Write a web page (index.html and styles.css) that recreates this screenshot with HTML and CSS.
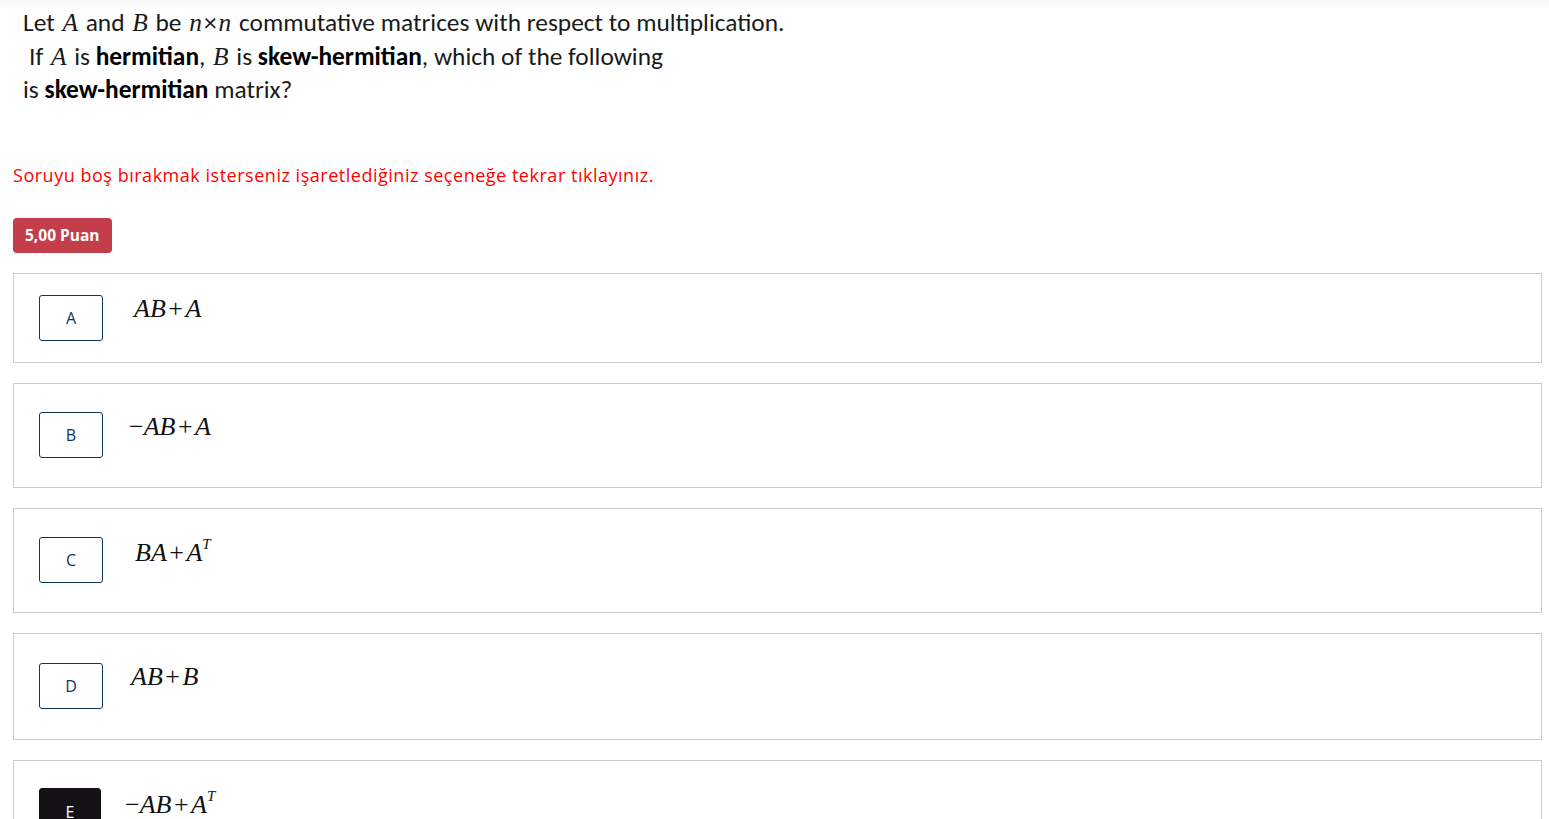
FILE: index.html
```html
<!DOCTYPE html>
<html lang="tr">
<head>
<meta charset="utf-8">
<title>Soru</title>
<link rel="stylesheet" href="styles.css">
</head>
<body>
<div class="topbar"></div>
<main class="page">
  <div class="question">
    <p class="q-line">Let <i class="m">A</i> and <i class="m">B</i> be <i class="m">n</i>×<i class="m">n</i> commutative matrices with respect to multiplication.</p>
    <p class="q-line q-indent">If <i class="m">A</i> is <b>hermitian</b>, <i class="m">B</i> is <b>skew-hermitian</b>, which of the following</p>
    <p class="q-line">is <b>skew-hermitian</b> matrix?</p>
  </div>
  <p class="notice">Soruyu boş bırakmak isterseniz işaretlediğiniz seçeneğe tekrar tıklayınız.</p>
  <span class="badge">5,00 Puan</span>
  <ul class="options">
    <li class="option">
      <span class="letter">A</span>
      <div class="math h46 o-a"><i>AB</i><span class="op">+</span><i>A</i></div>
    </li>
    <li class="option">
      <span class="letter">B</span>
      <div class="math h61 o-b">−<i>AB</i><span class="op">+</span><i>A</i></div>
    </li>
    <li class="option">
      <span class="letter">C</span>
      <div class="math h61 o-c"><i>BA</i><span class="op">+</span><i>A</i><sup><i>T</i></sup></div>
    </li>
    <li class="option">
      <span class="letter">D</span>
      <div class="math h63 o-d"><i>AB</i><span class="op">+</span><i>B</i></div>
    </li>
    <li class="option">
      <span class="letter selected">E</span>
      <div class="math h58 o-e">−<i>AB</i><span class="op">+</span><i>A</i><sup><i>T</i></sup></div>
    </li>
  </ul>
</main>
</body>
</html>
```
FILE: styles.css
```css
html, body {
  margin: 0;
  padding: 0;
  background: #fff;
}
body {
  font-family: "Open Sans", "Liberation Sans", sans-serif;
  color: #222;
  overflow: hidden;
  height: 819px;
}
.topbar {
  height: 0;
  box-shadow: 0 0 8px 3px rgba(0,0,0,0.06);
}
.page {
  padding: 0 7px 0 13px;
}
.question {
  padding: 6px 0 0 10px;
  font-family: Carlito, "Liberation Sans Narrow", "Open Sans", sans-serif;
  font-size: 25.4px;
  color: #1a1a1a;
}
.q-line {
  margin: 0;
  line-height: 33.5px;
}
.q-indent {
  padding-left: 6px;
}
.question b {
  font-weight: 700;
  color: #000;
}
.m {
  font-family: "Liberation Serif", serif;
  font-style: italic;
  padding: 0 2px;
}
.notice {
  margin: 55px 0 0;
  color: #f00;
  font-family: "Open Sans", sans-serif;
  font-size: 18px;
  letter-spacing: 0.52px;
  line-height: 26px;
}
.badge {
  display: inline-block;
  margin-top: 30px;
  background: #c43d4b;
  color: #fff;
  font-family: "Open Sans", sans-serif;
  font-weight: 700;
  font-size: 15.5px;
  line-height: 35px;
  height: 35px;
  padding: 0 12px;
  border-radius: 4px;
  letter-spacing: 0;
}
.options {
  list-style: none;
  margin: 20px 0 0;
  padding: 0;
  display: flex;
  flex-direction: column;
  gap: 20px;
}
.option {
  display: flex;
  align-items: center;
  border: 1px solid #cccccc;
  padding: 21px 25px;
}
.letter {
  box-sizing: border-box;
  width: 64px;
  height: 46px;
  flex: none;
  display: flex;
  align-items: center;
  justify-content: center;
  border: 1px solid #0d3558;
  border-radius: 3px;
  color: #0d3558;
  font-family: "Open Sans", sans-serif;
  font-size: 16px;
}
.letter.selected {
  width: 62px;
  background: #141214;
  border-color: #141214;
  color: #fff;
  padding-top: 2px;
}
.math {
  box-sizing: border-box;
  font-family: "Liberation Serif", serif;
  font-size: 26px;
  color: #111;
  line-height: 26px;
  white-space: nowrap;
}
.math .op {
  padding: 0 2.5px;
}
.math sup {
  font-size: 15px;
  vertical-align: top;
  line-height: 15px;
  position: relative;
  top: -3px;
}
.h46 { height: 46px; }
.h61 { height: 61px; }
.h63 { height: 63px; }
.h58 { height: 58px; }
.o-a { padding: 1px 0 0 31px; }
.o-b { padding: 9px 0 0 26px; }
.o-c { padding: 10px 0 0 32px; }
.o-d { padding: 9px 0 0 28px; }
.o-e { padding: 10px 0 0 24px; }
```
